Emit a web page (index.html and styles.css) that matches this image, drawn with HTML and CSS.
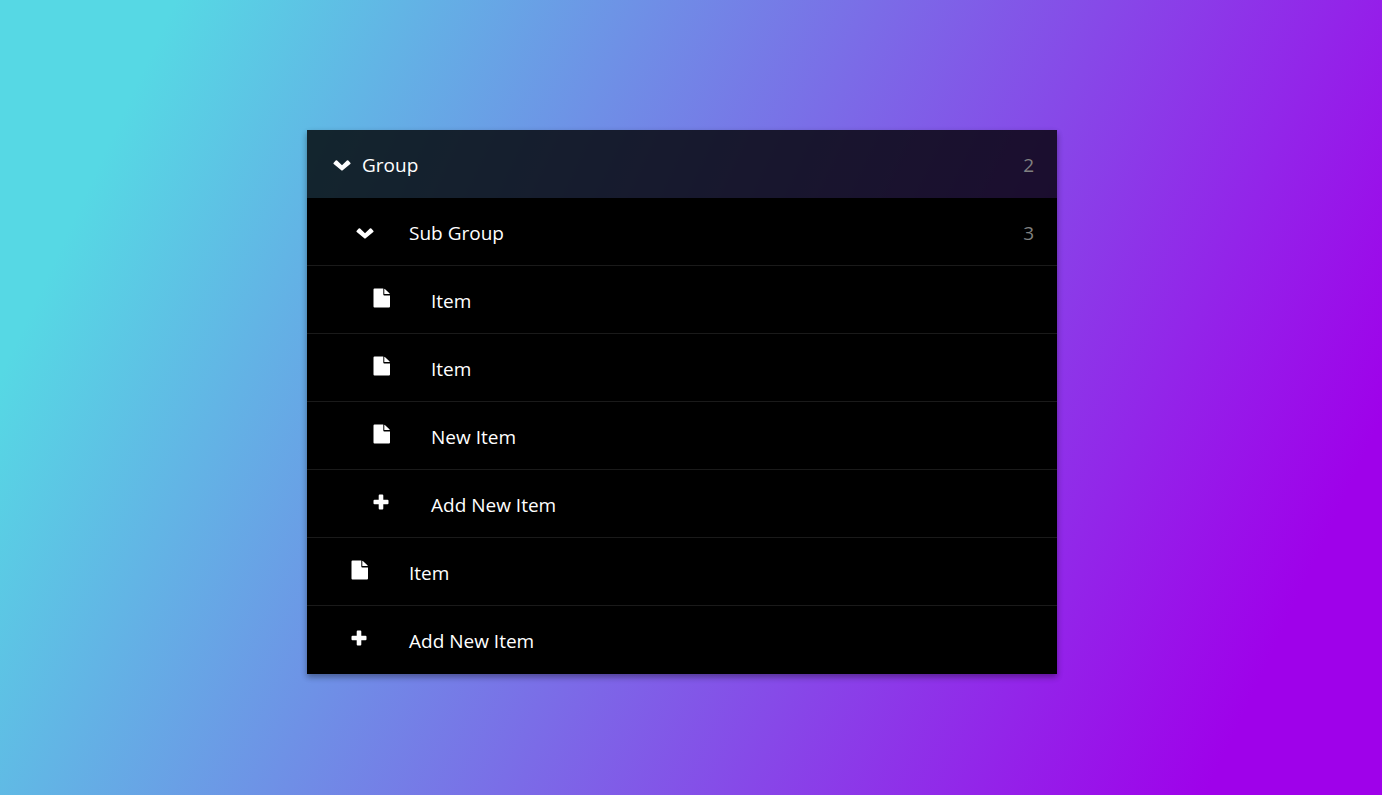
FILE: index.html
```
<!DOCTYPE html>
<html lang="en">
<head>
  <meta charset="UTF-8">
  <title>Nested List</title>
  <meta name="viewport" content="width=device-width, initial-scale=1.0">
  <link rel="stylesheet" href="styles.css">
</head>
<body>

  <!-- Shared icons -->
  <svg class="sprite" aria-hidden="true">
    <symbol id="chevron" viewBox="0 0 18 12">
      <path d="M.7 3.700L2.700 1.600a1 1 0 0 1 1.400 0L9 6.300l4.900-4.700a1 1 0 0 1 1.400 0l2 2.100a1 1 0 0 1 0 1.400L9.700 11.300a1 1 0 0 1-1.400 0L.7 5.100a1 1 0 0 1 0-1.400z"/>
    </symbol>
    <symbol id="file" viewBox="0 0 18 20">
      <path d="M1.500 .5H10.300V6.500a1 1 0 0 0 1 1H17V18.500a1 1 0 0 1-1 1H1.500a1 1 0 0 1-1-1V1.500a1 1 0 0 1 1-1zM11.300 .7a1.500 1.500 0 0 1 .6 .4L16.400 5.200a1.500 1.500 0 0 1 .4 .9H11.300z"/>
    </symbol>
    <symbol id="plus" viewBox="0 0 16 16">
      <path d="M6.700 .5h2.600a1 1 0 0 1 1 1v4.200h4.200a1 1 0 0 1 1 1v2.600a1 1 0 0 1-1 1h-4.200v4.200a1 1 0 0 1-1 1H6.700a1 1 0 0 1-1-1v-4.200H1.500a1 1 0 0 1-1-1V6.700a1 1 0 0 1 1-1h4.200V1.500a1 1 0 0 1 1-1z"/>
    </symbol>
  </svg>

  <main class="tree">
    <button class="row group" aria-expanded="true">
      <span class="icon"><svg class="chevron"><use href="#chevron"/></svg></span>
      <span class="label">Group</span>
      <span class="count">2</span>
    </button>
    <ul class="list">
      <li>
        <button class="row sub-group" aria-expanded="true">
          <span class="icon"><svg class="chevron"><use href="#chevron"/></svg></span>
          <span class="label">Sub Group</span>
          <span class="count">3</span>
        </button>
        <ul class="list nested">
          <li>
            <a class="row item" href="#">
              <span class="icon"><svg class="file"><use href="#file"/></svg></span>
              <span class="label">Item</span>
            </a>
          </li>
          <li>
            <a class="row item" href="#">
              <span class="icon"><svg class="file"><use href="#file"/></svg></span>
              <span class="label">Item</span>
            </a>
          </li>
          <li>
            <a class="row item" href="#">
              <span class="icon"><svg class="file"><use href="#file"/></svg></span>
              <span class="label">New Item</span>
            </a>
          </li>
          <li>
            <button class="row item">
              <span class="icon"><svg class="plus"><use href="#plus"/></svg></span>
              <span class="label">Add New Item</span>
            </button>
          </li>
        </ul>
      </li>
      <li>
        <a class="row item" href="#">
          <span class="icon"><svg class="file"><use href="#file"/></svg></span>
          <span class="label">Item</span>
        </a>
      </li>
      <li>
        <button class="row item last">
          <span class="icon"><svg class="plus"><use href="#plus"/></svg></span>
          <span class="label">Add New Item</span>
        </button>
      </li>
    </ul>
  </main>

  <script>
    document.querySelectorAll("[aria-expanded]").forEach(btn => {
      btn.onclick = () => {
        const open = btn.getAttribute("aria-expanded") === "true";
        btn.setAttribute("aria-expanded", !open);
        btn.nextElementSibling.hidden = open;
      };
    });
  </script>
</body>
</html>
```
FILE: styles.css
```
* {
  box-sizing: border-box;
}

body {
  margin: 0;
  min-height: 100vh;
  padding: 130px 18px 0 0;
  font-family: "Segoe UI", "Open Sans", sans-serif;
  font-size: 19px;
  color: #fff;
  background: linear-gradient(115deg, #56d8e4 10%, #9f01ea 90%) no-repeat;
}

.sprite {
  display: none;
}

.tree {
  width: 100%;
  max-width: 750px;
  margin: 0 auto;
  box-shadow: 0 3px 6px rgba(0, 0, 0, 0.16), 0 3px 6px rgba(0, 0, 0, 0.23);
}

.list {
  margin: 0;
  padding: 0;
  list-style: none;
}

.row {
  display: flex;
  align-items: center;
  width: 100%;
  height: 68px;
  padding: 2px 23px 0 44px;
  border: 0;
  border-bottom: 1px solid #1a1a1a;
  background: #000;
  color: inherit;
  font: inherit;
  text-align: left;
  text-decoration: none;
  cursor: pointer;
}

.group {
  padding-left: 26px;
  border-bottom-color: transparent;
  background: rgba(0, 0, 0, 0.8);
}

.nested .row {
  padding-left: 66px;
}

.last {
  border-bottom-color: transparent;
}

.icon {
  display: flex;
  flex: none;
  width: 58px;
}

.group .icon {
  width: 29px;
}

.sub-group .icon {
  padding-left: 5px;
}

.item .icon {
  padding-bottom: 6px;
}

.icon svg {
  fill: #fff;
}

.chevron {
  width: 18px;
  height: 12px;
}

.file {
  width: 18px;
  height: 20px;
}

.plus {
  width: 16px;
  height: 16px;
}

.label {
  flex: 1;
}

.count {
  color: #808080;
}
```
